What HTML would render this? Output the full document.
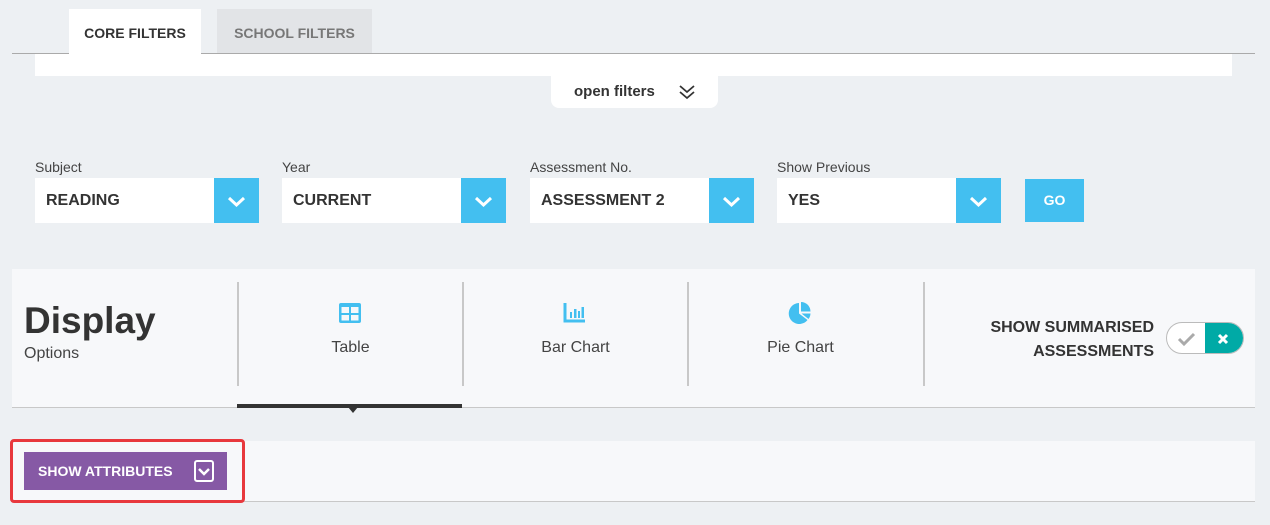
<!DOCTYPE html>
<html><head><style>
*{box-sizing:border-box;margin:0;padding:0}
body{width:1270px;height:525px;background:#edf0f3;font-family:"Liberation Sans",sans-serif;position:relative;overflow:hidden;color:#333}
.a{position:absolute}
.tab{font-weight:bold;font-size:14px;text-align:center;line-height:48px}
.lbl{font-size:14px;color:#444}
.sel{background:#fff;height:45px;font-weight:bold;font-size:16px;line-height:45px;padding-left:11px;color:#333}
.dd{position:absolute;right:0;top:0;width:45px;height:45px;background:#43bff0}
.div{width:2px;background:#c8c8c8;top:282px;height:104px}
.opt{text-align:center;font-size:16px;color:#444;top:339px;width:225px}
</style></head><body>
<div class="a" style="left:12px;top:53px;width:1243px;height:1px;background:#aaa"></div>
<div class="a tab" style="left:69px;top:9px;width:132px;height:45px;background:#fff;color:#333">CORE FILTERS</div>
<div class="a tab" style="left:217px;top:9px;width:155px;height:44px;background:#e2e4e7;color:#777">SCHOOL FILTERS</div>
<div class="a" style="left:35px;top:54px;width:1197px;height:22px;background:#fff"></div>
<div class="a" style="left:551px;top:76px;width:167px;height:32px;background:#fff;border-radius:0 0 8px 8px;font-weight:bold;font-size:15px;line-height:32px;padding-left:23px">open filters
<svg style="position:absolute;left:127px;top:8px" width="18" height="16" viewBox="0 0 18 16"><path d="M2 2l7 6 7-6M2 8l7 6 7-6" fill="none" stroke="#333" stroke-width="1.8"/></svg></div>

<div class="a lbl" style="left:35px;top:159px">Subject</div>
<div class="a lbl" style="left:282px;top:159px">Year</div>
<div class="a lbl" style="left:530px;top:159px">Assessment No.</div>
<div class="a lbl" style="left:777px;top:159px">Show Previous</div>
<div class="a sel" style="left:35px;top:178px;width:224px">READING<div class="dd"><svg width="45" height="45"><path d="M15 20l7.5 7 7.5-7" fill="none" stroke="#fff" stroke-width="3"/></svg></div></div>
<div class="a sel" style="left:282px;top:178px;width:224px">CURRENT<div class="dd"><svg width="45" height="45"><path d="M15 20l7.5 7 7.5-7" fill="none" stroke="#fff" stroke-width="3"/></svg></div></div>
<div class="a sel" style="left:530px;top:178px;width:224px">ASSESSMENT 2<div class="dd"><svg width="45" height="45"><path d="M15 20l7.5 7 7.5-7" fill="none" stroke="#fff" stroke-width="3"/></svg></div></div>
<div class="a sel" style="left:777px;top:178px;width:224px">YES<div class="dd"><svg width="45" height="45"><path d="M15 20l7.5 7 7.5-7" fill="none" stroke="#fff" stroke-width="3"/></svg></div></div>
<div class="a" style="left:1025px;top:179px;width:59px;height:43px;background:#43bff0;color:#fff;font-weight:bold;font-size:14px;text-align:center;line-height:43px">GO</div>

<div class="a" style="left:12px;top:269px;width:1243px;height:139px;background:#f7f8fa;border-bottom:1px solid #c8c8c8"></div>
<div class="a" style="left:24px;top:300px;font-size:37px;font-weight:bold;color:#333">Display</div>
<div class="a" style="left:24px;top:345px;font-size:16px;color:#444">Options</div>
<div class="a div" style="left:237px"></div>
<div class="a div" style="left:462px"></div>
<div class="a div" style="left:687px"></div>
<div class="a div" style="left:923px"></div>
<svg class="a" style="left:339px;top:303px" width="22" height="20"><rect x="0" y="0" width="22" height="20" rx="2" fill="#43bff0"/><rect x="2.5" y="4" width="7.5" height="6" fill="#f7f8fa"/><rect x="12" y="4" width="7.5" height="6" fill="#f7f8fa"/><rect x="2.5" y="12" width="7.5" height="5.5" fill="#f7f8fa"/><rect x="12" y="12" width="7.5" height="5.5" fill="#f7f8fa"/></svg>
<svg class="a" style="left:563px;top:302px" width="24" height="21"><path d="M2 1v18h20" fill="none" stroke="#43bff0" stroke-width="3"/><rect x="7" y="10" width="2" height="6" fill="#43bff0"/><rect x="11" y="7" width="2.5" height="9" fill="#43bff0"/><rect x="15" y="9" width="2" height="7" fill="#43bff0"/><rect x="18.5" y="5" width="2.5" height="11" fill="#43bff0"/></svg>
<svg class="a" style="left:788px;top:301px" width="26" height="26"><path d="M11 2A10.5 10.5 0 1 0 19.5 19L11 12.5Z" fill="#43bff0"/><path d="M13 1A9.5 9.5 0 0 1 22.5 10.5H13Z" fill="#43bff0"/><path d="M13.5 12.5H22.5A9.5 9.5 0 0 1 20.5 18Z" fill="#43bff0"/></svg>
<div class="a opt" style="left:238px">Table</div>
<div class="a opt" style="left:463px">Bar Chart</div>
<div class="a opt" style="left:688px">Pie Chart</div>
<div class="a" style="left:237px;top:404px;width:225px;height:4px;background:#333"></div>
<div class="a" style="left:348px;top:407px;width:0;height:0;border-left:5px solid transparent;border-right:5px solid transparent;border-top:6px solid #333"></div>
<div class="a" style="left:940px;top:316px;width:214px;text-align:right;font-weight:bold;font-size:16px;line-height:24px;color:#333">SHOW SUMMARISED<br>ASSESSMENTS</div>
<div class="a" style="left:1166px;top:322px;width:78px;height:32px;border-radius:16px;border:1px solid #bbb;background:#fff;overflow:hidden">
<div class="a" style="left:38px;top:0;width:40px;height:32px;background:#00aaa6"></div>
<svg class="a" style="left:10px;top:8px" width="20" height="16"><path d="M2 8l5 5 10-10" fill="none" stroke="#aaa" stroke-width="3"/></svg>
<svg class="a" style="left:50px;top:10px" width="12" height="12"><path d="M2 2l8 8M10 2l-8 8" stroke="#fff" stroke-width="3"/></svg>
</div>

<div class="a" style="left:12px;top:441px;width:1243px;height:61px;background:#f7f8fa;border-bottom:1px solid #c8c8c8"></div>
<div class="a" style="left:10px;top:439px;width:235px;height:64px;border:3px solid #e8383d;border-radius:4px"></div>
<div class="a" style="left:24px;top:452px;width:203px;height:38px;background:#8659a5;color:#fff;font-weight:bold;font-size:14px;line-height:38px;padding-left:14px">SHOW ATTRIBUTES
<svg class="a" style="left:170px;top:8px" width="22" height="22"><rect x="1" y="1" width="18" height="20" rx="2" fill="none" stroke="#fff" stroke-width="2"/><path d="M5 9l5 5 5-5" fill="none" stroke="#fff" stroke-width="2.5"/></svg></div>
</body></html>
